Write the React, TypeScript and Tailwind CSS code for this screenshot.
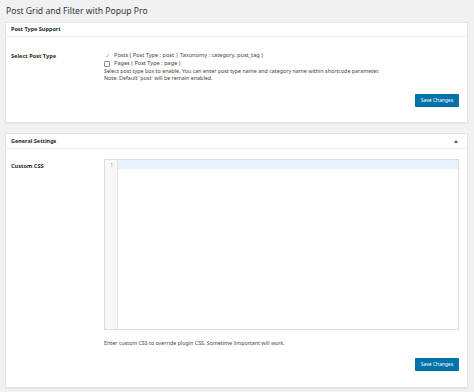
import React from 'react';

const SaveButton = () => (
  <div className="flex justify-end">
    <button className="h-[12px] w-[44px] rounded-[1px] bg-[#0073aa] text-[5px] leading-[12px] text-white shadow-[0_1px_0_#006799]">
      Save Changes
    </button>
  </div>
);

const App = () => {
  return (
    <div
      className="h-[392px] w-[474px] overflow-hidden bg-[#f1f1f1] pl-[5px] pr-[6px] text-[#23282d]"
      style={{ fontFamily: '"Noto Sans", "Open Sans", sans-serif' }}
    >
      {/* Page title */}
      <div className="h-[22px] pt-[5px] pl-[1px] text-[8.6px] leading-[12px] text-[#32373c]">
        Post Grid and Filter with Popup Pro
      </div>

      {/* Post Type Support */}
      <div className="h-[101px] border border-[#e2e4e7] bg-white shadow-[0_1px_1px_rgba(0,0,0,0.04)]">
        <div className="flex h-[14px] items-center border-b border-[#eeeeee] px-[5px] text-[5.5px] font-bold">
          Post Type Support
        </div>
        <div className="flex pt-[12px]">
          <div className="w-[98px] pl-[5px] pt-[3px] text-[5.6px] font-bold leading-[8px]">Select Post Type</div>
          <div className="flex-1 pt-[3px] text-[5.6px] leading-[7.8px] text-[#444]">
            <div className="flex items-center">
              <span className="flex w-[10px] items-center pl-[1px] text-[6.5px] leading-[7px] text-[#b4b9be]">✓</span>
              <span>Posts ( Post Type : post | Taxonomy : category, post_tag )</span>
            </div>
            <div className="flex items-center">
              <span className="flex w-[10px] items-center">
                <span className="block h-[6px] w-[6px] rounded-[1px] border border-[#8c8f94] bg-white" />
              </span>
              <span>Pages ( Post Type : page )</span>
            </div>
            <div className="text-[5.35px]">
              Select post type box to enable. You can enter post type name and category name within shortcode parameter.
            </div>
            <div className="text-[5.35px]">Note: Default `post` will be remain enabled.</div>
          </div>
        </div>
        <div className="pr-[8px] pt-[11px]">
          <SaveButton />
        </div>
      </div>

      {/* General Settings */}
      <div className="mt-[10px] h-[255px] border border-[#e2e4e7] bg-white shadow-[0_1px_1px_rgba(0,0,0,0.04)]">
        <div className="flex h-[15px] items-center justify-between border-b border-[#eeeeee] pl-[5px] pr-[9px] text-[5.5px] font-bold">
          <span>General Settings</span>
          <span className="block h-0 w-0 border-x-[2px] border-b-[3px] border-x-transparent border-b-[#555]" />
        </div>
        <div className="flex pt-[10px]">
          <div className="w-[98px] pl-[5px] pt-[3px] text-[5.6px] font-bold leading-[8px]">Custom CSS</div>
          <div className="flex-1 pr-[8px]">
            <div className="flex h-[171px] border border-[#dddddd] bg-white">
              <div className="w-[13px] border-r border-[#e6e6e6] bg-[#f7f7f7] pr-[4px] pt-[1px] text-right text-[5px] leading-[8px] text-[#999]">
                1
              </div>
              <div className="flex-1">
                <div className="h-[8.5px] bg-[#e8f2ff]" />
              </div>
            </div>
            <div className="pt-[10px] text-[5.3px] leading-[7px] text-[#444]">
              Enter custom CSS to override plugin CSS. Sometime !important will work.
            </div>
            <div className="pt-[11px]">
              <SaveButton />
            </div>
          </div>
        </div>
      </div>
    </div>
  );
};

export default App;
